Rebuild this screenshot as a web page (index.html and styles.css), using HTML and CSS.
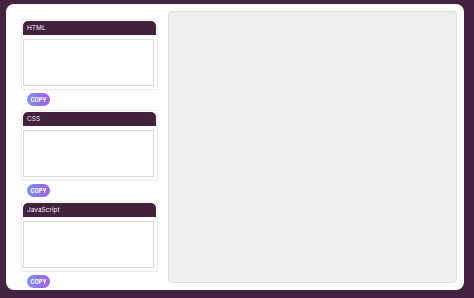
FILE: index.html
```html
<!DOCTYPE html>
<html>
<head>
<meta charset="utf-8">
<link rel="stylesheet" href="styles.css">
</head>
<body>
<div class="card">
  <div class="editors">
    <div class="editor">
      <div class="panel">
        <div class="panel-head">HTML</div>
        <textarea class="code"></textarea>
      </div>
      <button class="copy">COPY</button>
    </div>
    <div class="editor">
      <div class="panel">
        <div class="panel-head">CSS</div>
        <textarea class="code"></textarea>
      </div>
      <button class="copy">COPY</button>
    </div>
    <div class="editor">
      <div class="panel">
        <div class="panel-head">JavaScript</div>
        <textarea class="code"></textarea>
      </div>
      <button class="copy">COPY</button>
    </div>
  </div>
  <div class="preview"></div>
</div>
</body>
</html>
```
FILE: styles.css
```css
html, body {
  margin: 0;
  height: 100%;
}
body {
  background: #43233f;
  font-family: Inter, "Noto Sans", sans-serif;
  padding: 4px 10px 8px 6px;
  box-sizing: border-box;
}
.card {
  background: #fffdfd;
  border-radius: 8px;
  height: 100%;
  box-sizing: border-box;
  padding: 7px 7px 7px 15px;
  display: flex;
  gap: 10px;
}
.editors {
  width: 137px;
  padding-top: 8px;
  display: flex;
  flex-direction: column;
  gap: 4px;
}
.editor {
  display: flex;
  flex-direction: column;
  gap: 3px;
}
.panel {
  border: 1px solid #eeeaea;
  border-radius: 2px;
  padding: 1px 1px 3px 1px;
  height: 71px;
  box-sizing: border-box;
  display: flex;
  flex-direction: column;
  gap: 4px;
}
.panel-head {
  background: #42213d;
  color: #f4eef3;
  height: 14px;
  border-radius: 5px 5px 0 0;
  font-size: 6.5px;
  font-weight: 400;
  line-height: 14px;
  padding-left: 4px;
}
.code {
  width: 131px;
  height: 47px;
  box-sizing: border-box;
  border: 1px solid #dcdcdc;
  background: #ffffff;
  margin: 0;
  padding: 0;
  resize: none;
}
.copy {
  align-self: flex-start;
  margin-left: 6px;
  width: 23px;
  height: 13px;
  padding: 0;
  border: none;
  border-radius: 7px;
  background: linear-gradient(90deg, #7b92ee, #9f5ee3);
  color: #ffffff;
  font-family: Inter, sans-serif;
  font-weight: 700;
  font-size: 5.5px;
}
.preview {
  flex: 1;
  background: #efefef;
  border: 1px solid #dedede;
  border-radius: 4px;
}
```
